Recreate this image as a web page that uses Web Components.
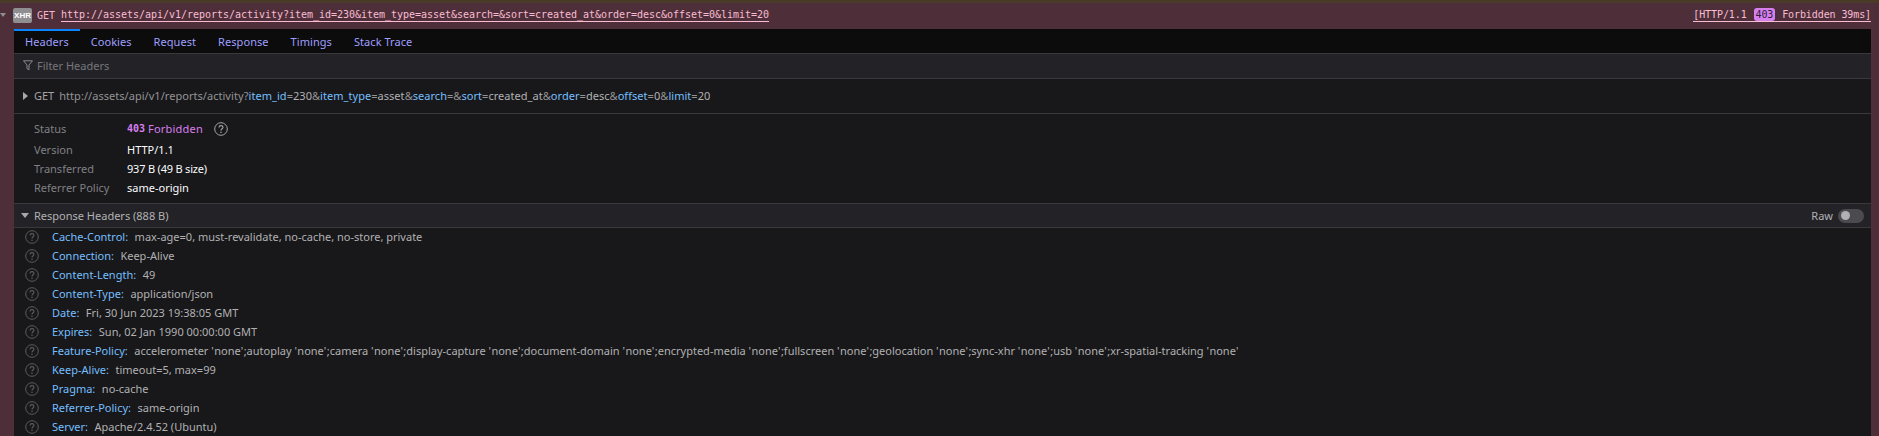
<!DOCTYPE html>
<html>
<head>
<meta charset="utf-8">
<style>
  html, body { margin: 0; padding: 0; height: 436px; overflow: hidden; background: #4e2f39; }
  body { font-family: "Noto Sans", "Open Sans", sans-serif; font-size: 11px; color: #d7d7db; }
</style>
</head>
<body>
<net-summary></net-summary>
<net-panel>
  <net-tabs></net-tabs>
  <net-filter></net-filter>
  <net-request></net-request>
  <net-status></net-status>
  <net-section></net-section>
  <header-row name="Cache-Control" value="max-age=0, must-revalidate, no-cache, no-store, private"></header-row>
  <header-row name="Connection" value="Keep-Alive"></header-row>
  <header-row name="Content-Length" value="49"></header-row>
  <header-row name="Content-Type" value="application/json"></header-row>
  <header-row name="Date" value="Fri, 30 Jun 2023 19:38:05 GMT"></header-row>
  <header-row name="Expires" value="Sun, 02 Jan 1990 00:00:00 GMT"></header-row>
  <header-row name="Feature-Policy" value="accelerometer 'none';autoplay 'none';camera 'none';display-capture 'none';document-domain 'none';encrypted-media 'none';fullscreen 'none';geolocation 'none';sync-xhr 'none';usb 'none';xr-spatial-tracking 'none'"></header-row>
  <header-row name="Keep-Alive" value="timeout=5, max=99"></header-row>
  <header-row name="Pragma" value="no-cache"></header-row>
  <header-row name="Referrer-Policy" value="same-origin"></header-row>
  <header-row name="Server" value="Apache/2.4.52 (Ubuntu)"></header-row>
</net-panel>

<script>
const helpIcon = (size, color) => `
  <svg width="${size}" height="${size}" viewBox="0 0 14 14" fill="none" style="display:block">
    <circle cx="7" cy="7" r="6.3" stroke="${color}" stroke-width="1"/>
    <path d="M5 5.4C5 4.2 5.9 3.6 7 3.6s2 .7 2 1.7c0 1.500-2 1.500-2 3.200" stroke="${color}" stroke-width="1.100"/>
    <circle cx="7" cy="10.300" r=".8" fill="${color}"/>
  </svg>`;

const mono = `"DejaVu Sans Mono", "Liberation Mono", monospace`;

class NetSummary extends HTMLElement {
  constructor() {
    super();
    this.attachShadow({ mode: "open" });
    this.shadowRoot.innerHTML = `
      <style>
        :host { display: flex; align-items: center; height: 25px; box-sizing: border-box; margin-top: 4px;
          font-family: ${mono}; font-size: 10px; color: #f5b5cd; background: #4e2f39; position: relative; }
        .strip { position: absolute; left: 0; right: 0; top: -4px; height: 3px; background: #4a3b28; }
        .tri { width: 0; height: 0; border: 3px solid transparent; border-top: 4px solid #8d8d90; border-bottom: 0; margin-left: 0; margin-top: -3px; }
        .xhr { margin-left: 7px; width: 19px; height: 15px; margin-top: -3px; background: #8f8f92; border-radius: 2px; color: #fff; font: 700 8px "Liberation Sans", sans-serif;
          display: flex; align-items: center; justify-content: center; }
        .method { margin-left: 5px; margin-top: -3px; }
        a { margin-left: 6px; margin-top: -3px; color: #f9bcd3; text-decoration: none; border-bottom: 1px solid #f9bcd3; line-height: 13px; letter-spacing: -.02px; }
        .right { margin-left: auto; margin-right: 8px; margin-top: -3px; display: flex; border-bottom: 1px solid #f9bcd3; line-height: 13px; white-space: pre; color: #f9bcd3; letter-spacing: -.1px; }
        .code { background: #d87ff0; color: #2a1f3a; border-radius: 3px; padding: 0 2px; margin: 0 1px; }
      </style>
      <span class="strip"></span>
      <span class="tri"></span>
      <span class="xhr">XHR</span>
      <span class="method">GET</span>
      <a>http://assets/api/v1/reports/activity?item_id=230&amp;item_type=asset&amp;search=&amp;sort=created_at&amp;order=desc&amp;offset=0&amp;limit=20</a>
      <span class="right">[HTTP/1.1 <span class="code">403</span> Forbidden 39ms]</span>`;
  }
}

class NetPanel extends HTMLElement {
  constructor() {
    super();
    this.attachShadow({ mode: "open" });
    this.shadowRoot.innerHTML = `
      <style>
        :host { display: block; margin: 0 8px 0 14px; background: #18181a; height: 407px; overflow: hidden; }
      </style>
      <slot></slot>`;
  }
}

class NetTabs extends HTMLElement {
  constructor() {
    super();
    this.attachShadow({ mode: "open" });
    const tabs = ["Headers", "Cookies", "Request", "Response", "Timings", "Stack Trace"];
    this.shadowRoot.innerHTML = `
      <style>
        :host { display: flex; height: 25px; box-sizing: border-box; background: #0c0c0d; border-bottom: 1px solid #38383d; color: #9f9fff; font-size: 11px; letter-spacing: .06px; }
        span { padding: 1px 11px 0; line-height: 20px; border-top: 2px solid transparent; }
        span.on { border-top-color: #0a84ff; }
      </style>
      ${tabs.map((t, i) => `<span class="${i == 0 ? "on" : ""}">${t}</span>`).join("")}`;
  }
}

class NetFilter extends HTMLElement {
  constructor() {
    super();
    this.attachShadow({ mode: "open" });
    this.shadowRoot.innerHTML = `
      <style>
        :host { display: flex; align-items: center; height: 25px; box-sizing: border-box; background: #232327; border-bottom: 1px solid #38383d; color: #76767b; padding: 0 0 1px 9px; }
        svg { margin-right: 4px; }
      </style>
      <svg width="10" height="11" viewBox="0 0 10 11" fill="none"><path d="M.5.8h9L6 5v4.800L4 8.600V5z" stroke="#8a8a8f"/></svg>
      <span>Filter Headers</span>`;
  }
}

class NetRequest extends HTMLElement {
  constructor() {
    super();
    this.attachShadow({ mode: "open" });
    this.shadowRoot.innerHTML = `
      <style>
        :host { display: flex; align-items: center; height: 35px; box-sizing: border-box; border-bottom: 1px solid #38383d; color: #939395; padding: 0 0 1px 9px; }
        .tri { width: 0; height: 0; border: 4px solid transparent; border-left: 5px solid #a8a8ab; border-right: 0; margin-right: 6px; }
        .method { margin-right: 5px; color: #a5a5a8; }
        .url { letter-spacing: .04px; }
        b { font-weight: 400; color: #75bfff; }
        i { font-style: normal; color: #b1b1b3; }
      </style>
      <span class="tri"></span>
      <span class="method">GET</span>
      <span class="url">http://assets/api/v1/reports/activity?<b>item_id</b>=<i>230</i>&amp;<b>item_type</b>=<i>asset</i>&amp;<b>search</b>=&amp;<b>sort</b>=<i>created_at</i>&amp;<b>order</b>=<i>desc</i>&amp;<b>offset</b>=<i>0</i>&amp;<b>limit</b>=<i>20</i></span>`;
  }
}

class NetStatus extends HTMLElement {
  constructor() {
    super();
    this.attachShadow({ mode: "open" });
    this.shadowRoot.innerHTML = `
      <style>
        :host { display: grid; grid-template-columns: 93px auto; grid-auto-rows: 19px; justify-content: start; align-items: center;
          height: 90px; box-sizing: border-box; padding: 7px 0 0 20px; color: #fbfbfe; border-bottom: 1px solid #38383d; }
        .l { color: #808084; }
        .first { height: 23px; margin-bottom: 4px; }
        .st { display: flex; align-items: center; color: #d87ff0; }
        .st b { font: 700 10px ${mono}; margin-right: 3px; }
        .st em { font-style: normal; letter-spacing: .2px; }
        .st svg { margin-left: 11px; }
        .tight { letter-spacing: -.2px; }
      </style>
      <span class="l first" style="line-height:23px">Status</span>
      <span class="st first"><b>403</b><em>Forbidden</em>${helpIcon(14, "#a5a5a8")}</span>
      <span class="l">Version</span><span>HTTP/1.1</span>
      <span class="l">Transferred</span><span class="tight">937 B (49 B size)</span>
      <span class="l">Referrer Policy</span><span>same-origin</span>`;
  }
}

class NetSection extends HTMLElement {
  constructor() {
    super();
    this.attachShadow({ mode: "open" });
    this.shadowRoot.innerHTML = `
      <style>
        :host { display: flex; align-items: center; height: 24px; box-sizing: border-box; background: #232327; border-bottom: 1px solid #38383d; color: #b1b1b3; padding: 0 7px 0 7px; font-size: 11px; }
        .tri { width: 0; height: 0; border: 4px solid transparent; border-top: 5px solid #a8a8ab; border-bottom: 0; margin-right: 5px; }
        .raw { margin-left: auto; margin-right: 5px; }
        .toggle { width: 26px; height: 14px; border-radius: 7px; background: #4a4a4f; display: flex; align-items: center; padding-left: 2px; box-sizing: border-box; }
        .toggle::before { content: ""; width: 9px; height: 9px; border-radius: 50%; background: #b1b1b3; margin-left: 1px; }
      </style>
      <span class="tri"></span>
      <span>Response Headers (888 B)</span>
      <span class="raw">Raw</span>
      <span class="toggle"></span>`;
  }
}

class HeaderRow extends HTMLElement {
  constructor() {
    super();
    this.attachShadow({ mode: "open" });
    this.shadowRoot.innerHTML = `
      <style>
        :host { display: flex; align-items: center; height: 19px; padding-left: 11px; color: #b1b1b3; white-space: nowrap; }
        :host(:first-of-type) { margin-top: -1px; }
        svg { margin-right: 13px; flex: none; }
        .name { color: #75bfff; margin-right: 6.5px; }
        .q { letter-spacing: .45px; }
      </style>
      ${helpIcon(14, "#5c5c60")}
      <span class="name"></span>
      <span class="value"></span>`;
    this.shadowRoot.querySelector(".name").textContent = this.getAttribute("name") + ":";
    const value = this.shadowRoot.querySelector(".value");
    this.getAttribute("value").split("'").forEach((part, i) => {
      if (i > 0) {
        const q = document.createElement("span");
        q.className = "q";
        q.textContent = "'";
        value.append(q);
      }
      value.append(part);
    });
  }
}

customElements.define("net-summary", NetSummary);
customElements.define("net-panel", NetPanel);
customElements.define("net-tabs", NetTabs);
customElements.define("net-filter", NetFilter);
customElements.define("net-request", NetRequest);
customElements.define("net-status", NetStatus);
customElements.define("net-section", NetSection);
customElements.define("header-row", HeaderRow);
</script>
</body>
</html>
